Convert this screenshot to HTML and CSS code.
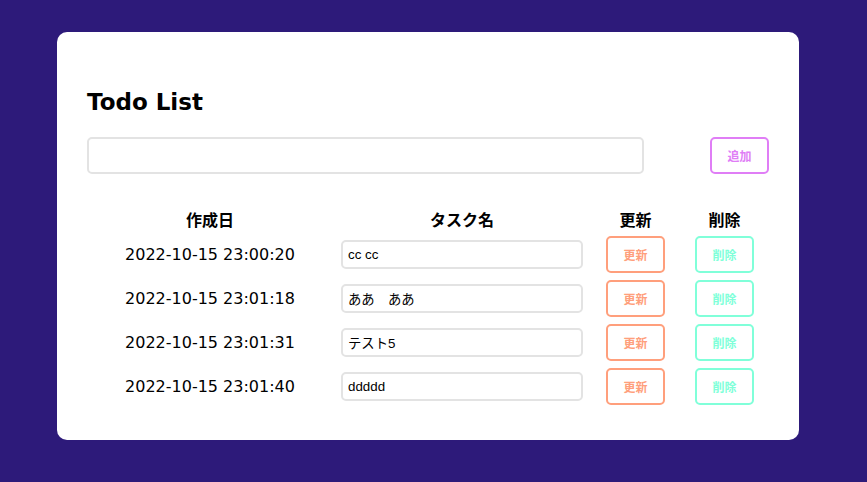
FILE: index.html
```html
<!DOCTYPE html>
<html lang="ja">
<head>
<meta charset="utf-8">
<title>Todo List</title>
<link rel="stylesheet" href="styles.css">
</head>
<body>
<main class="card">
  <h1 class="title">Todo List</h1>
  <div class="add-row">
    <input class="new-input" type="text">
    <button class="btn btn-add">追加</button>
  </div>
  <div class="table">
    <div class="th">作成日</div>
    <div class="th">タスク名</div>
    <div class="th">更新</div>
    <div class="th">削除</div>

    <div class="td date">2022-10-15 23:00:20</div>
    <div class="td"><input class="task-input" type="text" value="cc cc"></div>
    <div class="td"><button class="btn btn-update">更新</button></div>
    <div class="td"><button class="btn btn-delete">削除</button></div>

    <div class="td date">2022-10-15 23:01:18</div>
    <div class="td"><input class="task-input" type="text" value="ああ　ああ"></div>
    <div class="td"><button class="btn btn-update">更新</button></div>
    <div class="td"><button class="btn btn-delete">削除</button></div>

    <div class="td date">2022-10-15 23:01:31</div>
    <div class="td"><input class="task-input" type="text" value="テスト5"></div>
    <div class="td"><button class="btn btn-update">更新</button></div>
    <div class="td"><button class="btn btn-delete">削除</button></div>

    <div class="td date">2022-10-15 23:01:40</div>
    <div class="td"><input class="task-input" type="text" value="ddddd"></div>
    <div class="td"><button class="btn btn-update">更新</button></div>
    <div class="td"><button class="btn btn-delete">削除</button></div>
  </div>
</main>
</body>
</html>
```
FILE: styles.css
```css
html, body {
  margin: 0;
  padding: 0;
}
body {
  background: #2d1a7a;
  min-height: 482px;
  font-family: "DejaVu Sans", "Noto Sans CJK JP", sans-serif;
  color: #000;
  padding-top: 32px;
  box-sizing: border-box;
}
.card {
  width: 742px;
  margin-left: 57px;
  background: #fff;
  border-radius: 10px;
  padding: 52px 30px 35px;
  box-sizing: border-box;
}
.title {
  margin: 0;
  font-family: "DejaVu Sans", "Noto Sans CJK JP", sans-serif;
  font-size: 23px;
  font-weight: bold;
  line-height: 36px;
}
.add-row {
  display: flex;
  align-items: center;
  justify-content: space-between;
  margin-top: 17px;
}
.new-input {
  width: 557px;
  height: 37px;
  box-sizing: border-box;
  border: 2px solid #e3e3e3;
  border-radius: 5px;
  margin: 0;
  padding: 0 8px;
  outline: none;
}
.btn {
  width: 59px;
  height: 37px;
  box-sizing: border-box;
  background: #fff;
  border-radius: 5px;
  border: 2px solid;
  font-family: "Noto Sans CJK JP", sans-serif;
  font-size: 12px;
  font-weight: bold;
  padding: 0;
  margin: 0;
}
.btn-add {
  border-color: #e07ef6;
  color: #e07ef6;
}
.btn-update {
  border-color: #ff9f7c;
  color: #ff9f7c;
}
.btn-delete {
  border-color: #80ffd9;
  color: #80ffd9;
}
.table {
  display: grid;
  grid-template-columns: 246px 258px 89px 89px;
  grid-template-rows: 21px;
  grid-auto-rows: 37px;
  row-gap: 7px;
  margin-top: 34px;
}
.th {
  font-family: "Noto Sans CJK JP", sans-serif;
  font-weight: bold;
  font-size: 16px;
  text-align: center;
  line-height: 22px;
}
.td {
  display: flex;
  align-items: center;
  justify-content: center;
}
.date {
  font-size: 16px;
}
.task-input {
  width: 242px;
  height: 29px;
  box-sizing: border-box;
  border: 2px solid #e3e3e3;
  border-radius: 5px;
  margin: 0;
  padding: 0 5px;
  font-family: "Liberation Sans", "Noto Sans CJK JP", sans-serif;
  font-size: 13.33px;
  color: #000;
  outline: none;
}
```
